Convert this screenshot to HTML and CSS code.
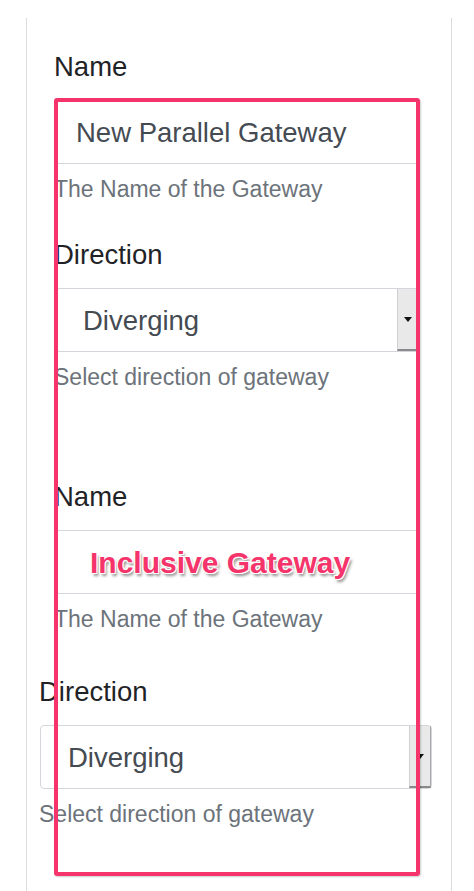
FILE: index.html
```html
<!DOCTYPE html>
<html>
<head>
<meta charset="UTF-8">
<title>Gateway properties</title>
<link rel="stylesheet" href="styles.css">
</head>
<body>
	<div class="panel">
		<div class="group">
			<label class="label">Name</label>
			<input class="field" type="text" value="New Parallel Gateway" readonly>
			<p class="help">The Name of the Gateway</p>
		</div>
		<div class="group" id="dirOne">
			<label class="label">Direction</label>
			<div class="select">
				<span class="selectValue">Diverging</span>
				<span class="selectBtn"></span>
			</div>
			<p class="help">Select direction of gateway</p>
		</div>
		<div class="group" id="nameTwo">
			<label class="label">Name</label>
			<input class="field" type="text" value="" readonly>
			<p class="help">The Name of the Gateway</p>
		</div>
		<div class="group" id="dirTwo">
			<label class="label">Direction</label>
			<div class="select">
				<span class="selectValue">Diverging</span>
				<span class="selectBtn"></span>
			</div>
			<p class="help">Select direction of gateway</p>
		</div>
	</div>

	<!-- markup drawn on top of the screenshot -->
	<div class="noteBox"></div>
	<div class="noteText">Inclusive Gateway</div>
</body>
</html>
```

FILE: styles.css
```css
body {
	margin: 0;
	background: #fff;
	font-family: "Liberation Sans", Arial, sans-serif;
	overflow: hidden;
}

.panel {
	box-sizing: border-box;
	width: 426px;
	min-height: 873px;
	margin: 18px 0 0 26px;
	padding: 29px 31px 0 28px;
	border-left: 1px solid #dcdcdc;
	border-right: 1px solid #dcdcdc;
}

.label {
	display: block;
	margin: 0 0 13px -1px;
	font-size: 27.5px;
	line-height: 40px;
	color: #1f2327;
}

.field {
	display: block;
	box-sizing: border-box;
	width: 100%;
	height: 64px;
	margin: 0;
	padding: 12px 20px 10px;
	border: 1px solid #d3d6da;
	border-radius: 4px;
	font-family: "Liberation Sans", Arial, sans-serif;
	font-size: 27.5px;
	line-height: 40px;
	color: #454b52;
	background: #fff;
	outline: none;
}

.help {
	margin: 9px 0 0 -1px;
	font-size: 23px;
	line-height: 33px;
	color: #6c737a;
}

.select {
	display: flex;
	box-sizing: border-box;
	height: 64px;
	border: 1px solid #d3d6da;
	border-radius: 4px;
	background: #fff;
}

.selectValue {
	flex: 1;
	padding: 12px 0 0 27px;
	font-size: 27.5px;
	line-height: 40px;
	color: #454b52;
}

.selectBtn {
	display: flex;
	align-items: center;
	justify-content: center;
	width: 20px;
	background: #e9e9e9;
	border-left: 1px solid #d0d0d0;
	border-right: 1px solid #a8a8a8;
	border-bottom: 2px solid #8a8a8a;
}

.selectBtn::after {
	content: "";
	border-left: 4px solid transparent;
	border-right: 4px solid transparent;
	border-top: 5px solid #111;
}

#dirOne {
	margin-top: 29px;
}

#nameTwo {
	margin-top: 83px;
}

#dirTwo {
	margin: 36px -12px 0 -15px;
}

.noteBox {
	position: absolute;
	left: 54px;
	top: 98px;
	width: 366px;
	height: 778px;
	box-sizing: border-box;
	border: 4px solid #f5346b;
	border-radius: 3px;
	box-shadow: 1px 1px 2px rgba(0, 0, 0, 0.2);
}

.noteText {
	position: absolute;
	left: 90px;
	top: 548px;
	font-size: 30px;
	line-height: 30px;
	font-weight: bold;
	color: #f5346b;
	text-shadow: -1px -1px 0 #fff, 1px -1px 0 #fff, -1px 1px 0 #fff, 1px 1px 0 #fff, 2px 3px 3px rgba(0, 0, 0, 0.45);
}
```
